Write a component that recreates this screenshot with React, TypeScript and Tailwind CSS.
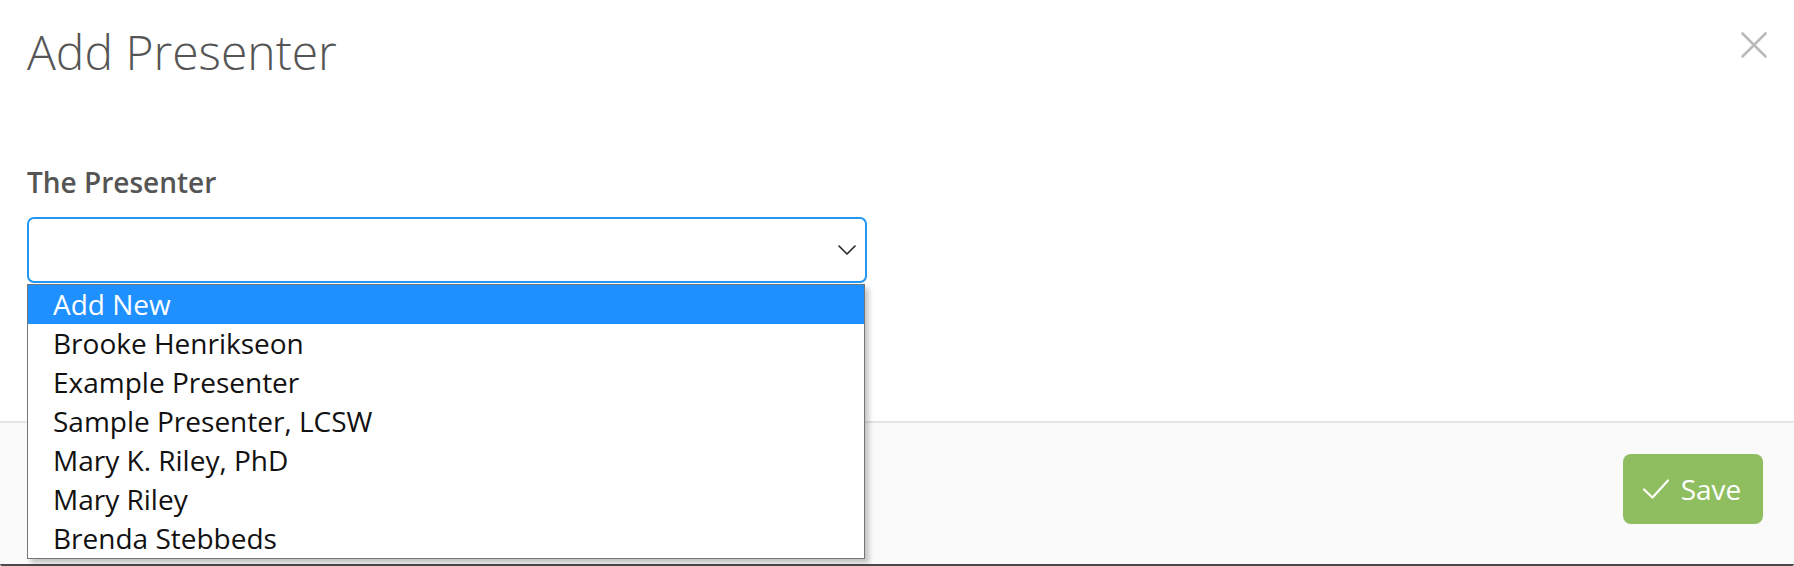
import React from "react";

const items = [
  "Add New",
  "Brooke Henrikseon",
  "Example Presenter",
  "Sample Presenter, LCSW",
  "Mary K. Riley, PhD",
  "Mary Riley",
  "Brenda Stebbeds",
];

export default function App() {
  return (
    <div
      className="w-[1794px] h-[566px] bg-white flex flex-col overflow-hidden"
      style={{ fontFamily: '"Open Sans", "Noto Sans", sans-serif' }}
    >
      {/* Header */}
      <div className="flex justify-between items-start pt-[23px] pl-[27px] pr-[27px] h-[120px]">
        <h1 className="text-[48px] leading-[58px] font-light text-[#555555]">
          Add Presenter
        </h1>
        <button className="mt-[9px] w-[26px] h-[26px] text-[#bababa]">
          <svg width="26" height="26" viewBox="0 0 26 26" fill="none" stroke="currentColor" strokeWidth="2.6" strokeLinecap="round">
            <path d="M1.5 1.5 L24.5 24.5 M24.5 1.5 L1.5 24.5" />
          </svg>
        </button>
      </div>

      {/* Body */}
      <div className="flex-1 relative px-[27px] pt-[44px]">
        <label className="block text-[28px] leading-[36px] font-semibold text-[#555555]">
          The Presenter
        </label>
        <div className="relative mt-[17px] w-[840px]">
          <div className="h-[66px] w-[840px] rounded-[7px] border-2 border-[#2196f3] bg-white flex items-center justify-end pr-[9px]">
            <svg width="18" height="10" viewBox="0 0 18 10" fill="none" stroke="#222222" strokeWidth="1.6" strokeLinecap="round" strokeLinejoin="round">
              <path d="M1 1 L9 9 L17 1" />
            </svg>
          </div>
          <ul className="absolute left-0 top-[67px] w-[838px] z-10 bg-white border border-[#767676] shadow-[4px_4px_5px_rgba(0,0,0,0.22)]">
            {items.map((it, i) => (
              <li
                key={it}
                className={
                  "h-[39px] leading-[39px] pl-[25px] text-[28px] " +
                  (i === 0 ? "bg-[#1e90ff] text-white" : "text-[#111111]")
                }
              >
                {it}
              </li>
            ))}
          </ul>
        </div>
      </div>

      {/* Footer */}
      <div className="h-[143px] border-t-2 border-[#e5e5e5] bg-[#fafafa] flex justify-end items-start pt-[31px] pr-[31px]">
        <button className="h-[70px] w-[140px] rounded-[8px] bg-[#8fbe60] text-white flex items-center justify-center gap-[12px] text-[28px] pr-[2px]">
          <svg width="26" height="20" viewBox="0 0 26 20" fill="none" stroke="white" strokeWidth="2.2" strokeLinecap="round" strokeLinejoin="round">
            <path d="M1 10.5 L9.5 18.5 L25 1.5" />
          </svg>
          <span className="leading-[38px]">Save</span>
        </button>
      </div>
      <div className="h-[2px] bg-[#4a4a4a] rounded-b-[3px]" />
    </div>
  );
}
